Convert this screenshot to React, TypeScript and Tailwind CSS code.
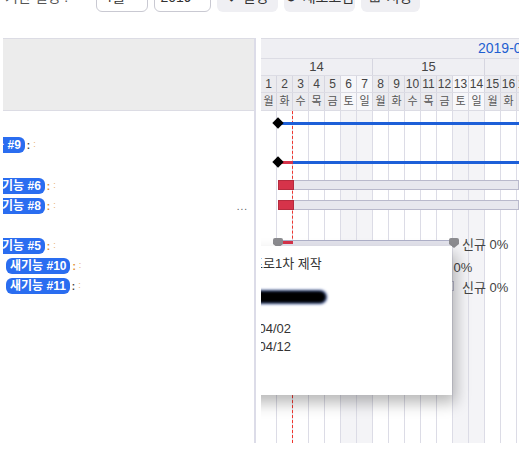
const days = Array.from({ length: 18 }, (_, i) => i + 1)
const weekNames = ['월', '화', '수', '목', '금', '토', '일']
const isWeekend = (d: number) => (d - 1) % 7 >= 5

function Badge({ label }: { label: string }) {
  return (
    <span className="h-[16px] px-[4px] rounded-[6px] bg-[#2a6df0] text-white font-bold text-[12px] leading-[16px] whitespace-nowrap">
      {label}
    </span>
  )
}

function LeftRow({ indent, label, colon = 'text-[#e08a2a]', extra }: { indent: string; label: string; colon?: string; extra?: boolean }) {
  return (
    <div className="h-[20px] flex items-center">
      <div className={`flex items-center ${indent}`}>
        <Badge label={label} />
        <span className={`ml-[2px] text-[10px] font-bold ${colon}`}>:</span>
        <span className="ml-[3px] text-[9px] text-[#e9b070]">:</span>
      </div>
      {extra && <span className="ml-auto mr-[6px] text-[10px] text-[#555] tracking-[1px]">...</span>}
    </div>
  )
}

function Handle() {
  return (
    <svg width="10" height="10" viewBox="0 0 10 10">
      <path d="M2 0h6a2 2 0 0 1 2 2v4l-5 4-5-4V2a2 2 0 0 1 2-2z" fill="#8c8c90" />
    </svg>
  )
}

export default function App() {
  return (
    <div className="w-[519px] h-[456px] overflow-hidden bg-white text-[#333] font-['Liberation_Sans','Noto_Sans_CJK_KR',sans-serif]">
      {/* 툴바 (위쪽이 잘림) */}
      <div className="-mt-[18px] h-[30px] flex items-stretch gap-[6px] pl-[5px] text-[14px]">
        <div className="w-[85px] flex items-center text-[#555]">기간 설정 :</div>
        <div className="w-[52px] border border-[#c9c9d2] rounded-md flex items-center justify-center gap-[6px]">
          4월 <span className="text-[9px]">▼</span>
        </div>
        <div className="w-[57px] border border-[#c9c9d2] rounded-md flex items-center justify-center gap-[4px]">
          2019 <span className="text-[9px]">▼</span>
        </div>
        <div className="w-[61px] bg-[#efeff3] rounded-md flex items-center justify-center gap-[6px]">
          <span className="text-[10px]">◆</span> 일정
        </div>
        <div className="w-[71px] bg-[#efeff3] rounded-md flex items-center justify-center gap-[6px]">
          <span className="font-bold">↻</span> 새로고침
        </div>
        <div className="w-[59px] bg-[#efeff3] rounded-md flex items-center justify-center gap-[6px]">
          <span>⊞</span> 저장
        </div>
      </div>

      <div className="mt-[26px] flex h-[405px]">
        {/* 왼쪽 목록 */}
        <div className="ml-[3px] w-[253px] border-r-2 border-[#dcdce8] overflow-hidden flex flex-col">
          <div className="h-[73px] shrink-0 bg-[#ececec] border-t border-b border-[#dcdce4]" />
          <div className="flex flex-col">
            <div className="h-[24px]" />
            <LeftRow indent="-ml-[36px]" label="새기능 #9" colon="text-[#444]" />
            <div className="h-[21px]" />
            <LeftRow indent="-ml-[16px]" label="새기능 #6" />
            <LeftRow indent="-ml-[16px]" label="새기능 #8" extra />
            <div className="h-[20px]" />
            <LeftRow indent="-ml-[16px]" label="새기능 #5" />
            <LeftRow indent="ml-[3px]" label="새기능 #10" />
            <LeftRow indent="ml-[3px]" label="새기능 #11" colon="text-[#444]" />
          </div>
        </div>

        {/* 간트 차트 */}
        <div className="ml-[5px] flex-1 overflow-hidden flex flex-col">
          <div className="shrink-0 bg-[#efeff3] border-t border-b border-[#dcdce4]">
            <div className="h-[19px] flex items-center pl-[217px] text-[14px] text-[#1f5fd1] whitespace-nowrap">2019-04</div>
            <div className="h-[17px] flex border-t border-[#dcdce4] text-[13px] text-[#444]">
              <div className="w-[112px] shrink-0 border-r border-[#d6d6e0] flex items-center justify-center">14</div>
              <div className="w-[112px] shrink-0 border-r border-[#d6d6e0] flex items-center justify-center">15</div>
              <div className="w-[112px] shrink-0" />
            </div>
            <div className="h-[17px] flex border-t border-[#dcdce4] text-[12px] text-[#444]">
              {days.map((d) => (
                <div key={d} className={`w-[16px] shrink-0 border-r border-[#d6d6e0] flex items-center justify-center ${isWeekend(d) ? 'bg-[#f7f7fa]' : 'bg-[#ebebef]'}`}>
                  {d}
                </div>
              ))}
            </div>
            <div className="h-[18px] flex border-t border-[#dcdce4] text-[11px] text-[#555]">
              {days.map((d) => (
                <div key={d} className={`w-[16px] shrink-0 border-r border-[#d6d6e0] flex items-center justify-center ${isWeekend(d) ? 'bg-[#f7f7fa]' : 'bg-[#ebebef]'}`}>
                  {weekNames[(d - 1) % 7]}
                </div>
              ))}
            </div>
          </div>

          <div className="relative h-[332px]">
            {/* 배경 격자 */}
            <div className="absolute inset-0 flex">
              {days.map((d) => (
                <div key={d} className={`w-[16px] shrink-0 border-r border-[#dcdce6] ${isWeekend(d) ? 'bg-[#f4f4f7]' : ''}`} />
              ))}
            </div>
            <div className="absolute left-[31px] top-0 bottom-0 border-l border-dashed border-[#f0352e]" />

            <div className="relative flex flex-col">
              <div className="h-[2px]" />
              <div className="relative h-[20px]">
                <div className="absolute left-[17px] right-0 top-[9px] h-[3px] bg-[#1d5fd8]" />
                <div className="absolute left-[13px] top-[6px] w-[8px] h-[8px] rotate-45 bg-black" />
              </div>
              <div className="h-[19px]" />
              <div className="relative h-[20px]">
                <div className="absolute left-[17px] w-[15px] top-[9px] h-[3px] bg-[#d6334a]" />
                <div className="absolute left-[32px] right-0 top-[9px] h-[3px] bg-[#1d5fd8]" />
                <div className="absolute left-[13px] top-[6px] w-[8px] h-[8px] rotate-45 bg-black" />
              </div>
              <div className="h-[3px]" />
              {[0, 1].map((i) => (
                <div key={i} className="relative h-[20px]">
                  <div className="absolute left-[32px] right-0 top-[5px] h-[10px] bg-[#e7e7ee] border border-[#b9b9cc]" />
                  <div className="absolute left-[17px] w-[16px] top-[5px] h-[10px] bg-[#d6334a] border border-[#b52b3e]" />
                </div>
              ))}
              <div className="h-[18px]" />
              <div className="relative h-[20px]">
                <div className="absolute left-[17px] w-[176px] top-[7px] h-[7px] bg-[#e3e3ec] border border-[#aeb0c8]" />
                <div className="absolute left-[18px] w-[14px] top-[8px] h-[3px] bg-[#d6334a]" />
                <div className="absolute left-[12px] top-[5px]"><Handle /></div>
                <div className="absolute left-[188px] top-[5px]"><Handle /></div>
                <span className="absolute left-[201px] top-[2px] text-[13px] text-[#444] whitespace-nowrap">신규 0%</span>
              </div>
              <div className="h-[3px]" />
              <div className="relative h-[20px]">
                <div className="absolute left-[17px] w-[144px] top-[5px] h-[10px] bg-[#e7e7ee] border border-[#b9b9cc]" />
                <span className="absolute left-[165px] top-[2px] text-[13px] text-[#444] whitespace-nowrap">신규 0%</span>
              </div>
              <div className="relative h-[20px]">
                <div className="absolute left-[17px] w-[176px] top-[5px] h-[10px] bg-[#e7e7ee] border border-[#b9b9cc]" />
                <span className="absolute left-[201px] top-[2px] text-[13px] text-[#444] whitespace-nowrap">신규 0%</span>
              </div>
            </div>

            {/* 툴팁 팝업 */}
            <div className="absolute -left-[49px] top-[135px] w-[240px] h-[149px] bg-white shadow-[4px_8px_14px_rgba(0,0,0,0.28)] pt-[9px] text-[13px] text-[#333]">
              <div className="h-[18px] leading-[18px] pl-[39px] whitespace-nowrap">프로1차 제작</div>
              <div className="mt-[18px] ml-[38px] w-[76px] h-[12px] rounded-full bg-black blur-[1.5px] ring-1 ring-[#2a4fb0]" />
              <div className="mt-[17px] pl-[14px] leading-[18px] whitespace-nowrap">2019/04/02</div>
              <div className="pl-[14px] leading-[18px] whitespace-nowrap">2019/04/12</div>
            </div>
          </div>
        </div>
      </div>
    </div>
  )
}
